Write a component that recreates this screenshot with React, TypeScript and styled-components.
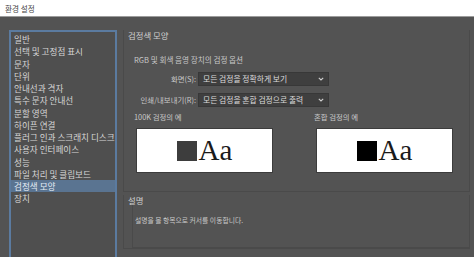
import React from 'react';
import styled, { createGlobalStyle } from 'styled-components';

const GlobalStyle = createGlobalStyle`
  html, body {
    margin: 0;
    padding: 0;
    background: #535353;
  }
  body {
    font-family: "Noto Sans CJK KR", "Noto Sans", sans-serif;
    overflow: hidden;
  }
`;

const categories = [
  '일반',
  '선택 및 고정점 표시',
  '문자',
  '단위',
  '안내선과 격자',
  '특수 문자 안내선',
  '분할 영역',
  '하이픈 연결',
  '플러그 인과 스크래치 디스크',
  '사용자 인터페이스',
  '성능',
  '파일 처리 및 클립보드',
  '검정색 모양',
  '장치',
];

const Window = styled.div`
  width: 474px;
  height: 257px;
  display: flex;
  flex-direction: column;
  background: #535353;
  overflow: hidden;
`;

const TitleBar = styled.div`
  height: 16px;
  flex: none;
  background: #ffffff;
  border-bottom: 1px solid #9c9c9c;
  display: flex;
  align-items: center;
  padding-left: 5px;
  font-size: 7.6px;
  color: #444;
`;

const Body = styled.div`
  flex: 1;
  display: flex;
  gap: 6px;
  padding: 13px 4px 0 9px;
  min-height: 0;
`;

const Sidebar = styled.ul`
  list-style: none;
  margin: 0;
  width: 104px;
  flex: none;
  padding: 1px 0 0;
  border: 2px solid #5b7ba0;
  border-bottom: none;
  background: #4f4f4f;
`;

const Item = styled.li<{ $active?: boolean }>`
  height: 12.25px;
  line-height: 12.25px;
  padding-left: 3px;
  font-size: 8.6px;
  white-space: nowrap;
  color: ${p => (p.$active ? '#e4ecf5' : '#d6d6d6')};
  background: ${p => (p.$active ? '#5a7491' : 'transparent')};
`;

const Content = styled.div`
  flex: 1;
  display: flex;
  flex-direction: column;
  gap: 3px;
`;

const Group = styled.section`
  border: 1px solid #4a4a4a;
  border-top: none;
  padding: 0 0 0 10px;
`;

const GroupTitle = styled.div`
  font-size: 8.4px;
  color: #cfcfcf;
  height: 10px;
  line-height: 10px;
  margin-left: -6px;
`;

const SubTitle = styled.div`
  font-size: 7.6px;
  color: #c8c8c8;
  margin-top: 14px;
  height: 11px;
  line-height: 11px;
`;

const Row = styled.div`
  display: flex;
  align-items: center;
  margin-top: 6px;
  height: 15px;
`;

const Label = styled.label`
  width: 72px;
  margin-left: -10px;
  text-align: right;
  padding-right: 2px;
  font-size: 7.4px;
  color: #c8c8c8;
  white-space: nowrap;
`;

const Select = styled.div`
  width: 131px;
  height: 14px;
  box-sizing: border-box;
  background: #3f3f3f;
  border: 1px solid #383838;
  display: flex;
  align-items: center;
  justify-content: space-between;
  padding: 0 4px 0 4px;
  font-size: 7.8px;
  color: #dcdcdc;
`;

const Samples = styled.div`
  display: flex;
  gap: 41px;
  margin-top: 5px;
  padding-bottom: 18px;
`;

const Sample = styled.div`
  display: flex;
  flex-direction: column;
  gap: 7px;
`;

const SampleLabel = styled.div`
  font-size: 7.4px;
  color: #c8c8c8;
  height: 9px;
  line-height: 9px;
`;

const Preview = styled.div`
  width: 137px;
  height: 45px;
  margin-left: 2px;
  background: #ffffff;
  border: 1px solid #3c3c3c;
  box-sizing: border-box;
  display: flex;
  align-items: center;
  justify-content: center;
  gap: 2px;
`;

const Swatch = styled.div<{ $color: string }>`
  width: 20px;
  height: 20px;
  background: ${p => p.$color};
  margin-top: 1px;
`;

const Sampletext = styled.span`
  font-family: "Liberation Serif", serif;
  font-size: 29px;
  line-height: 1;
  color: #1a1a1a;
`;

const Description = styled.div`
  padding: 10px 0 22px 2px;
  margin-left: -2px;
  font-size: 6.8px;
  color: #c8c8c8;
  border-left: 1px solid #4a4a4a;
  border-bottom: 1px solid #4a4a4a;
`;

const Chevron = () => (
  <svg width="6" height="4" viewBox="0 0 6 4">
    <path d="M0.8 0.8 L3 3 L5.2 0.8" fill="none" stroke="#cfcfcf" strokeWidth="1.1" />
  </svg>
);

export default function App() {
  return (
    <>
      <GlobalStyle />
      <Window>
        <TitleBar>환경 설정</TitleBar>
        <Body>
          <Sidebar>
            {categories.map(c => (
              <Item key={c} $active={c === '검정색 모양'}>
                {c}
              </Item>
            ))}
          </Sidebar>
          <Content>
            <Group>
              <GroupTitle>검정색 모양</GroupTitle>
              <SubTitle>RGB 및 회색 음영 장치의 검정 옵션</SubTitle>
              <Row>
                <Label>화면(S):</Label>
                <Select>
                  모든 검정을 정확하게 보기
                  <Chevron />
                </Select>
              </Row>
              <Row>
                <Label>인쇄/내보내기(R):</Label>
                <Select>
                  모든 검정을 혼합 검정으로 출력
                  <Chevron />
                </Select>
              </Row>
              <Samples>
                <Sample>
                  <SampleLabel>100K 검정의 예</SampleLabel>
                  <Preview>
                    <Swatch $color="#3d3d3d" />
                    <Sampletext>Aa</Sampletext>
                  </Preview>
                </Sample>
                <Sample>
                  <SampleLabel>혼합 검정의 예</SampleLabel>
                  <Preview>
                    <Swatch $color="#000000" />
                    <Sampletext>Aa</Sampletext>
                  </Preview>
                </Sample>
              </Samples>
            </Group>
            <Group>
              <GroupTitle>설명</GroupTitle>
              <Description>설명을 볼 항목으로 커서를 이동합니다.</Description>
            </Group>
          </Content>
        </Body>
      </Window>
    </>
  );
}
